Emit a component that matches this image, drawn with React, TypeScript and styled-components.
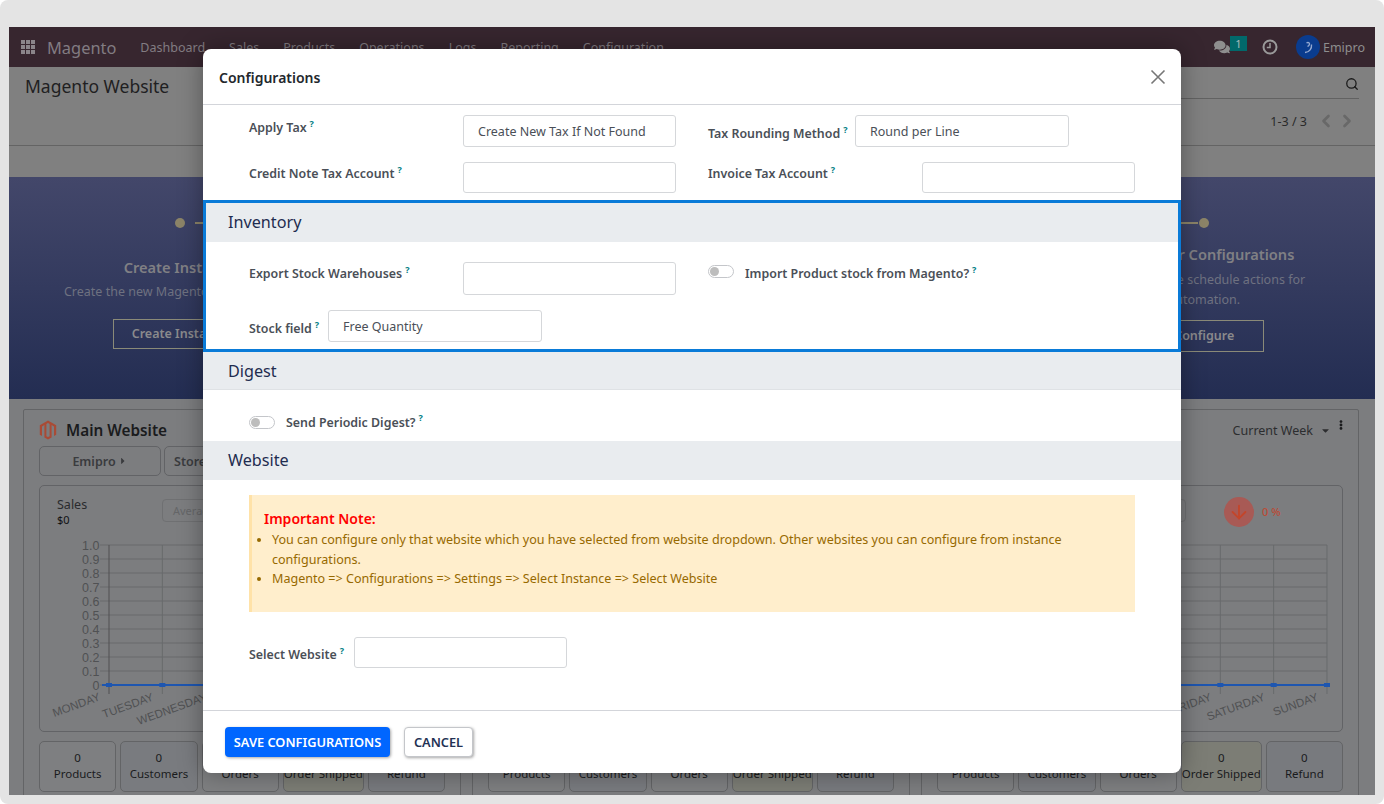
import React from 'react'
import styled, { createGlobalStyle } from 'styled-components'
import { Search, ArrowDown, ChevronLeft, ChevronRight } from 'lucide-react'
import { FaComments, FaCaretDown, FaCaretRight, FaEllipsisV } from 'react-icons/fa'

const NAV_ITEMS = ['Dashboard', 'Sales', 'Products', 'Operations', 'Logs', 'Reporting', 'Configuration']
const DAYS = ['MONDAY', 'TUESDAY', 'WEDNESDAY', 'THURSDAY', 'FRIDAY', 'SATURDAY', 'SUNDAY']
const TICKS = ['1.0', '0.9', '0.8', '0.7', '0.6', '0.5', '0.4', '0.3', '0.2', '0.1', '0']
const TILES = [
	{ label: 'Products', tint: '#7e7f81' },
	{ label: 'Customers', tint: '#797b7f' },
	{ label: 'Orders', tint: '#7e7f81' },
	{ label: 'Order Shipped', tint: '#7c7d75' },
	{ label: 'Refund', tint: '#787a7e' }
]

type ChartProps = { ticks?: boolean; days?: number[] }

function Chart({ ticks, days = [] }: ChartProps) {
	return (
		<svg width='404' height='196' style={{ display: 'block' }}>
			{TICKS.map((tick, i) => (
				<g key={tick}>
					<line x1='60' x2='389' y1={10 + i * 14} y2={10 + i * 14} stroke='#686a6c' />
					{ticks && (
						<text x='59.500' y={14.5 + i * 14} textAnchor='end' fontFamily='Liberation Sans' fontSize='12.5' fill='#505153'>
							{tick}
						</text>
					)}
				</g>
			))}
			{DAYS.map((day, i) => {
				const x = 69 + i * 53.33
				return (
					<g key={day}>
						<line x1={x} x2={x} y1='10' y2='159' stroke={i === 0 ? '#505153' : '#686a6c'} />
						<rect x={x - 3} y='148' width='6' height='4' fill='#1e56b0' />
						{days.includes(i) && (
							<text
								transform={`translate(${x - 8} 165) rotate(-20)`}
								textAnchor='end'
								fontFamily='Liberation Sans'
								fontSize='11.5'
								fill='#505153'
							>
								{day}
							</text>
						)}
					</g>
				)
			})}
			<line x1='62' x2='392' y1='150' y2='150' stroke='#1e56b0' strokeWidth='2' />
		</svg>
	)
}

function MagentoLogo() {
	return (
		<svg width='18' height='20' viewBox='0 0 18 20'>
			<path
				d='M9 0.5 L17.2 5.2 V14.8 L15 16 V6.500 L12.600 5.100 V17.400 L9 19.500 L5.400 17.400 V5.100 L3 6.500 V16 L0.800 14.800 V5.200 Z M9 3 L7.400 3.900 V16.200 L9 17.100 L10.600 16.200 V3.900 Z'
				fill='#a94b36'
				fillRule='evenodd'
			/>
		</svg>
	)
}

type CardProps = ChartProps & { controls?: boolean }

function WebsiteCard({ controls, ticks, days }: CardProps) {
	return (
		<Card>
			<CardTop>
				<CardTitle>
					<MagentoLogo />
					Main Website
				</CardTitle>
				{controls && (
					<>
						<WeekPicker>
							Current Week
							<FaCaretDown size={11} />
						</WeekPicker>
						<Kebab>
							<FaEllipsisV size={10} />
						</Kebab>
					</>
				)}
			</CardTop>
			<PillRow>
				<Pill $w={122}>
					Emipro
					<FaCaretRight size={10} />
				</Pill>
				<Pill $w={95} $start>
					Store
					<FaCaretRight size={10} />
				</Pill>
			</PillRow>
			<ChartBox>
				<ChartHead>
					<SalesText>
						Sales
						<small>$0</small>
					</SalesText>
					<MetricPicker>Average Order</MetricPicker>
					{controls && (
						<>
							<TrendCircle>
								<ArrowDown size={22} strokeWidth={2} />
							</TrendCircle>
							<TrendValue>0 %</TrendValue>
						</>
					)}
				</ChartHead>
				<Chart ticks={ticks} days={days} />
			</ChartBox>
			<TileGrid>
				{TILES.map(tile => (
					<Tile key={tile.label} $tint={tile.tint}>
						<span>0</span>
						<span>{tile.label}</span>
					</Tile>
				))}
			</TileGrid>
		</Card>
	)
}

function Hint() {
	return <Sup>?</Sup>
}

export default function App() {
	return (
		<Frame>
			<GlobalStyle />
			<AppWindow>
				<Navbar>
					<svg width='14' height='14' viewBox='0 0 14 14'>
						{[0, 5, 10].map(x =>
							[0, 5, 10].map(y => <rect key={`${x}-${y}`} x={x} y={y} width='4' height='4' fill='#8b858a' />)
						)}
					</svg>
					<Brand>Magento</Brand>
					{NAV_ITEMS.map(item => (
						<NavItem key={item}>{item}</NavItem>
					))}
					<NavRight>
						<ChatBox>
							<FaComments size={16} />
							<Badge>1</Badge>
						</ChatBox>
						<svg width='16' height='16' viewBox='0 0 16 16' fill='none' stroke='#9a9a9a' strokeWidth='2'>
							<circle cx='8' cy='8' r='6.500' />
							<path d='M8 4v4.500H4.800' strokeWidth='1.500' />
						</svg>
						<UserBox>
							<Avatar>
								<svg width='24' height='24' viewBox='0 0 24 24' fill='none' stroke='#93a8d0' strokeWidth='1.400'>
									<path d='M10.500 8c1.500-1 3-.5 3 1s-1.200 2-2 2.500M15.500 9.500c.5 4-2 7.500-6.500 8' />
								</svg>
							</Avatar>
							Emipro
						</UserBox>
					</NavRight>
				</Navbar>
				<ControlPanel>
					<PanelRow>
						<PageTitle>Magento Website</PageTitle>
						<SearchBar>
							<Search size={14} strokeWidth={2.2} />
						</SearchBar>
					</PanelRow>
					<PagerRow>
						<PagerText>1-3 / 3</PagerText>
						<ChevronLeft size={20} strokeWidth={3.2} color='#686868' />
						<ChevronRight size={20} strokeWidth={3.2} color='#686868' />
					</PagerRow>
				</ControlPanel>
				<Strip />
				<Banner>
					<Step>
						<StepDot />
						<StepTitle $mt={29}>Create Instance</StepTitle>
						<StepText $mt={5}>Create the new Magento Instance here.</StepText>
						<StepButton $w={134} $h={30} $mt={17}>
							Create Instance
						</StepButton>
					</Step>
					<Step>
						<StepDot />
					</Step>
					<Step>
						<StepDot />
					</Step>
					<Step>
						<StepDot $last />
						<StepTitle $mt={16}>Scheduler Configurations</StepTitle>
						<StepText $mt={6}>
							Configure the schedule actions for
							<br />
							automation.
						</StepText>
						<StepButton $w={120} $h={32} $mt={10}>
							Configure
						</StepButton>
					</Step>
				</Banner>
				<CardGrid>
					<WebsiteCard ticks days={[0, 1, 2]} />
					<WebsiteCard />
					<WebsiteCard controls days={[4, 5, 6]} />
				</CardGrid>
				<Modal>
					<ModalHeader>
						<ModalTitle>Configurations</ModalTitle>
						<svg width='16' height='16' viewBox='0 0 16 16' stroke='#777' strokeWidth='1.600'>
							<path d='M1.500 1.500l13 13M14.500 1.500l-13 13' />
						</svg>
					</ModalHeader>
					<ModalBody>
						<TopFields>
							<FieldRow $height={32}>
								<Field>
									<Label $w={214} $top={4}>
										Apply Tax
										<Hint />
									</Label>
									<TextInput readOnly value='Create New Tax If Not Found' $h={32} />
								</Field>
								<Field>
									<Label $w={147} $top={10}>
										Tax Rounding Method
										<Hint />
									</Label>
									<TextInput readOnly value='Round per Line' $h={32} $w={214} />
								</Field>
							</FieldRow>
							<FieldRow $height={31} $mt={15}>
								<Field>
									<Label $w={214} $top={3}>
										Credit Note Tax Account
										<Hint />
									</Label>
									<TextInput readOnly $h={31} />
								</Field>
								<Field>
									<Label $w={214} $top={3}>
										Invoice Tax Account
										<Hint />
									</Label>
									<TextInput readOnly $h={31} />
								</Field>
							</FieldRow>
						</TopFields>
						<Highlight>
							<SectionHead $h={42} $pt={2}>
								Inventory
							</SectionHead>
							<FieldRow $height={33} $mt={20}>
								<Field>
									<Label $w={214} $top={3}>
										Export Stock Warehouses
										<Hint />
									</Label>
									<TextInput readOnly $h={33} />
								</Field>
								<Field>
									<Toggle $mt={3} />
									<Label $top={3}>
										Import Product stock from Magento?
										<Hint />
									</Label>
								</Field>
							</FieldRow>
							<FieldRow $height={32} $mt={15}>
								<Field>
									<Label $w={79} $top={10}>
										Stock field
										<Hint />
									</Label>
									<TextInput readOnly value='Free Quantity' $h={32} $w={214} />
								</Field>
							</FieldRow>
						</Highlight>
						<SectionHead $h={38} $border>
							Digest
						</SectionHead>
						<DigestRow>
							<Toggle />
							<Label $top={1}>
								Send Periodic Digest?
								<Hint />
							</Label>
						</DigestRow>
						<SectionHead $h={39} $pb={2}>
							Website
						</SectionHead>
						<Note>
							<NoteTitle>Important Note:</NoteTitle>
							<NoteList>
								<li>
									You can configure only that website which you have selected from website dropdown. Other websites you
									can configure from instance configurations.
								</li>
								<li>Magento =&gt; Configurations =&gt; Settings =&gt; Select Instance =&gt; Select Website</li>
							</NoteList>
						</Note>
						<FieldRow $height={31} $mt={25}>
							<Field>
								<Label $w={105} $top={9}>
									Select Website
									<Hint />
								</Label>
								<TextInput readOnly $h={31} />
							</Field>
						</FieldRow>
					</ModalBody>
					<ModalFooter>
						<PrimaryButton>SAVE CONFIGURATIONS</PrimaryButton>
						<GhostButton>CANCEL</GhostButton>
					</ModalFooter>
				</Modal>
			</AppWindow>
		</Frame>
	)
}

const GlobalStyle = createGlobalStyle`
	* {
		box-sizing: border-box;
	}
	html,
	body {
		margin: 0;
		padding: 0;
		background: #fff;
		font-family: 'Noto Sans', 'Open Sans', sans-serif;
		font-size: 12.5px;
	}
`
const Frame = styled.div`
	width: 1384px;
	height: 804px;
	padding: 27px 9px 9px;
	background: #e4e4e4;
	border-radius: 8px;
	overflow: hidden;
`
const AppWindow = styled.div`
	position: relative;
	height: 768px;
	overflow: hidden;
	background: #7c7d7f;
`
const Navbar = styled.nav`
	display: flex;
	align-items: center;
	height: 40px;
	padding-left: 12px;
	background: #37262f;
	color: #827c82;
`
const Brand = styled.span`
	margin: 0 0 0 12px;
	font-size: 16.4px;
`
const NavItem = styled.span`
	margin-left: 24px;
	font-size: 12.5px;
`
const NavRight = styled.div`
	display: flex;
	align-items: center;
	margin-left: auto;
	padding-right: 10px;
	gap: 18px;
	color: #8e8e8e;
`
const ChatBox = styled.div`
	position: relative;
	width: 33px;
	height: 16px;
	margin-right: -3px;
`
const Badge = styled.span`
	position: absolute;
	top: -3px;
	left: 16px;
	width: 17px;
	height: 15px;
	background: #01696b;
	color: #a9b9ba;
	font-size: 11px;
	line-height: 15px;
	text-align: center;
`
const UserBox = styled.div`
	display: flex;
	align-items: center;
	gap: 3px;
`
const Avatar = styled.div`
	width: 24px;
	height: 24px;
	border-radius: 50%;
	background: #0a3c8e;
`
const ControlPanel = styled.div`
	height: 79px;
	padding: 7px 16px 0;
	border-bottom: 1px solid #646464;
	background: #808080;
`
const PanelRow = styled.div`
	display: flex;
	justify-content: space-between;
	align-items: flex-start;
`
const PageTitle = styled.h1`
	margin: 0;
	color: #1f2022;
	font-size: 17.5px;
	font-weight: 400;
	line-height: 24px;
`
const SearchBar = styled.div`
	display: flex;
	justify-content: flex-end;
	align-items: center;
	width: 178px;
	height: 25px;
	padding-bottom: 4px;
	border-bottom: 1px solid #626262;
	color: #1b1b1b;
`
const PagerRow = styled.div`
	display: flex;
	justify-content: flex-end;
	align-items: center;
	gap: 1px;
	height: 18px;
	margin-top: 13px;
	padding-right: 2px;
	color: #2a2a2a;
`
const PagerText = styled.span`
	margin-right: 8px;
`
const Strip = styled.div`
	height: 31px;
	background: #808080;
`
const Banner = styled.section`
	display: grid;
	grid-template-columns: repeat(4, 1fr);
	height: 222px;
	background: linear-gradient(#43476a, #232d52);
`
const Step = styled.div`
	display: flex;
	flex-direction: column;
	align-items: center;
	padding-top: 41px;
	color: #8a8a8c;
	text-align: center;
`
const StepDot = styled.span<{ $last?: boolean }>`
	position: relative;
	width: 10px;
	height: 10px;
	border-radius: 50%;
	background: #8c8468;
	&::after {
		content: '';
		position: absolute;
		top: 4px;
		left: ${p => (p.$last ? '-200px' : '20px')};
		width: ${p => (p.$last ? '190px' : '320px')};
		height: 2px;
		background: #8c8468;
	}
`
const StepTitle = styled.h3<{ $mt: number }>`
	margin: ${p => p.$mt}px 0 0;
	color: #808084;
	font-size: 14.6px;
	font-weight: 600;
	line-height: 20px;
	white-space: nowrap;
`
const StepText = styled.p<{ $mt: number }>`
	margin: ${p => p.$mt}px 0 0;
	color: #6e7180;
	font-size: 12.5px;
	line-height: 20px;
	white-space: nowrap;
`
const StepButton = styled.span<{ $w: number; $h: number; $mt: number }>`
	width: ${p => p.$w}px;
	height: ${p => p.$h}px;
	margin-top: ${p => p.$mt}px;
	border: 1px solid #8a8a78;
	font-weight: 600;
	line-height: ${p => p.$h - 2}px;
`
const CardGrid = styled.div`
	display: grid;
	grid-template-columns: repeat(3, 438px);
	gap: 11px;
	padding: 10px 14px;
`
const Card = styled.article`
	padding: 9px 15px 16px;
	border: 1px solid #636466;
	border-radius: 2px;
`
const CardTop = styled.div`
	display: flex;
	align-items: center;
	height: 22px;
`
const CardTitle = styled.h2`
	display: flex;
	align-items: center;
	gap: 9px;
	margin: 0;
	color: #1a1b1d;
	font-size: 15.3px;
	font-weight: 600;
`
const WeekPicker = styled.span`
	display: flex;
	align-items: center;
	gap: 7px;
	margin-left: auto;
	color: #2c2d2f;
`
const Kebab = styled.span`
	display: flex;
	margin: -10px -3px 0 5px;
	color: #1a1b1d;
`
const PillRow = styled.div`
	display: flex;
	gap: 3px;
	margin-top: 5px;
`
const Pill = styled.span<{ $w: number; $start?: boolean }>`
	display: flex;
	justify-content: ${p => (p.$start ? 'flex-start' : 'center')};
	align-items: center;
	gap: 2px;
	width: ${p => p.$w}px;
	height: 30px;
	padding-left: ${p => (p.$start ? 9 : 0)}px;
	border: 1px solid #626366;
	border-radius: 5px;
	color: #3a3b3e;
	font-weight: 600;
	white-space: nowrap;
`
const ChartBox = styled.div`
	height: 247px;
	margin-top: 9px;
	border: 1px solid #626366;
	border-radius: 5px;
`
const ChartHead = styled.div`
	display: flex;
	align-items: flex-start;
	height: 49px;
	padding: 11px 0 0 17px;
`
const SalesText = styled.div`
	display: flex;
	flex-direction: column;
	width: 105px;
	color: #2a2b2e;
	line-height: 16px;
	small {
		margin-top: -1px;
		color: #101113;
		font-size: 11px;
	}
`
const MetricPicker = styled.span`
	width: 126px;
	height: 23px;
	margin-top: 2px;
	padding-left: 10px;
	border: 1px solid #6f7072;
	border-radius: 4px;
	color: #656668;
	font-size: 11px;
	line-height: 21px;
`
const TrendCircle = styled.span`
	display: flex;
	justify-content: center;
	align-items: center;
	width: 30px;
	height: 30px;
	margin: 0 0 0 38px;
	border-radius: 50%;
	background: #a85a55;
	color: #c4452a;
`
const TrendValue = styled.span`
	margin: 7px 0 0 8px;
	color: #bb4a35;
	font-size: 11px;
	font-weight: 500;
`
const TileGrid = styled.div`
	display: grid;
	grid-template-columns: repeat(5, 1fr);
	gap: 4px;
	margin-top: 9px;
`
const Tile = styled.div<{ $tint: string }>`
	display: flex;
	flex-direction: column;
	align-items: center;
	height: 51px;
	padding-top: 8px;
	border: 1px solid #636466;
	border-radius: 5px;
	background: ${p => p.$tint};
	color: #1a1b1d;
	font-size: 11.5px;
	line-height: 16px;
	white-space: nowrap;
`
const Modal = styled.div`
	position: absolute;
	top: 22px;
	left: 194px;
	display: flex;
	flex-direction: column;
	width: 978px;
	height: 724px;
	border-radius: 8px;
	background: #fff;
	box-shadow: 0 0 24px rgba(0, 0, 0, 0.35);
	color: #4a4f57;
`
const ModalHeader = styled.header`
	display: flex;
	justify-content: space-between;
	align-items: center;
	height: 56px;
	padding: 0 15px 0 16px;
	border-bottom: 1px solid #d3d5da;
`
const ModalTitle = styled.h4`
	margin: 2px 0 0;
	color: #23272c;
	font-size: 14px;
	font-weight: 600;
`
const ModalBody = styled.div`
	flex: 1;
`
const TopFields = styled.div`
	height: 95px;
	padding-top: 10px;
`
const FieldRow = styled.div<{ $height: number; $mt?: number }>`
	display: grid;
	grid-template-columns: 1fr 1fr;
	column-gap: 32px;
	height: ${p => p.$height}px;
	margin-top: ${p => p.$mt ?? 0}px;
	padding: 0 46px;
`
const Field = styled.div`
	display: flex;
	align-items: flex-start;
	min-width: 0;
`
const Label = styled.label<{ $w?: number; $top?: number }>`
	flex: none;
	width: ${p => (p.$w ? `${p.$w}px` : 'auto')};
	padding-top: ${p => p.$top ?? 0}px;
	color: #4a4f57;
	font-size: 12.4px;
	font-weight: 600;
	line-height: 18px;
	white-space: nowrap;
`
const Sup = styled.sup`
	margin-left: 3px;
	color: #017e84;
	font-size: 9px;
	font-weight: 700;
	line-height: 0;
`
const TextInput = styled.input<{ $h: number; $w?: number }>`
	flex: none;
	width: ${p => p.$w ?? 213}px;
	height: ${p => p.$h}px;
	padding: 0 14px;
	border: 1px solid #d5d7da;
	border-radius: 3px;
	outline: none;
	background: #fff;
	color: #4a4f57;
	font-family: inherit;
	font-size: 12.5px;
`
const Highlight = styled.section`
	height: 152px;
	outline: 3px solid #0a7bd8;
	outline-offset: -3px;
`
const SectionHead = styled.h3<{ $h: number; $pt?: number; $pb?: number; $border?: boolean }>`
	display: flex;
	align-items: center;
	height: ${p => p.$h}px;
	margin: 0;
	padding: ${p => p.$pt ?? 0}px 0 ${p => p.$pb ?? 0}px 25px;
	border-bottom: ${p => (p.$border ? '1px solid #dfe2e5' : 'none')};
	background: #e9ecef;
	color: #1f2d50;
	font-size: 16.2px;
	font-weight: 400;
`
const Toggle = styled.span<{ $mt?: number }>`
	position: relative;
	flex: none;
	width: 26px;
	height: 13px;
	margin-top: ${p => p.$mt ?? 0}px;
	margin-right: 11px;
	border: 1px solid #c4c6ca;
	border-radius: 7px;
	&::before {
		content: '';
		position: absolute;
		top: 1px;
		left: 1px;
		width: 9px;
		height: 9px;
		border-radius: 50%;
		background: #bdbdbd;
	}
`
const DigestRow = styled.div`
	display: flex;
	align-items: center;
	height: 51px;
	padding: 13px 46px 0;
`
const Note = styled.aside`
	height: 117px;
	margin: 15px 46px 0;
	padding: 14px 12px 0;
	border-left: 3px solid #ffe2a8;
	background: #ffeecc;
	color: #976900;
	font-size: 12.55px;
`
const NoteTitle = styled.div`
	margin-bottom: 1px;
	color: #ff0000;
	font-size: 14px;
	font-weight: 600;
	line-height: 20px;
`
const NoteList = styled.ul`
	margin: 0;
	padding: 0 0 0 8px;
	line-height: 19.5px;
`
const ModalFooter = styled.footer`
	display: flex;
	gap: 14px;
	height: 63px;
	padding: 16px 22px 0;
	border-top: 1px solid #d3d5da;
`
const PrimaryButton = styled.button`
	width: 165px;
	height: 30px;
	padding: 0;
	border: none;
	border-radius: 4px;
	background: #0066ff;
	box-shadow: 1px 1px 3px rgba(0, 0, 0, 0.35);
	color: #fff;
	font-family: inherit;
	font-size: 12.8px;
	font-weight: 600;
`
const GhostButton = styled.button`
	width: 69px;
	height: 30px;
	padding: 0;
	border: 1px solid #c4c6ca;
	border-radius: 4px;
	background: #fff;
	box-shadow: 1px 1px 3px rgba(0, 0, 0, 0.35);
	color: #233154;
	font-family: inherit;
	font-size: 12.8px;
	font-weight: 600;
`
